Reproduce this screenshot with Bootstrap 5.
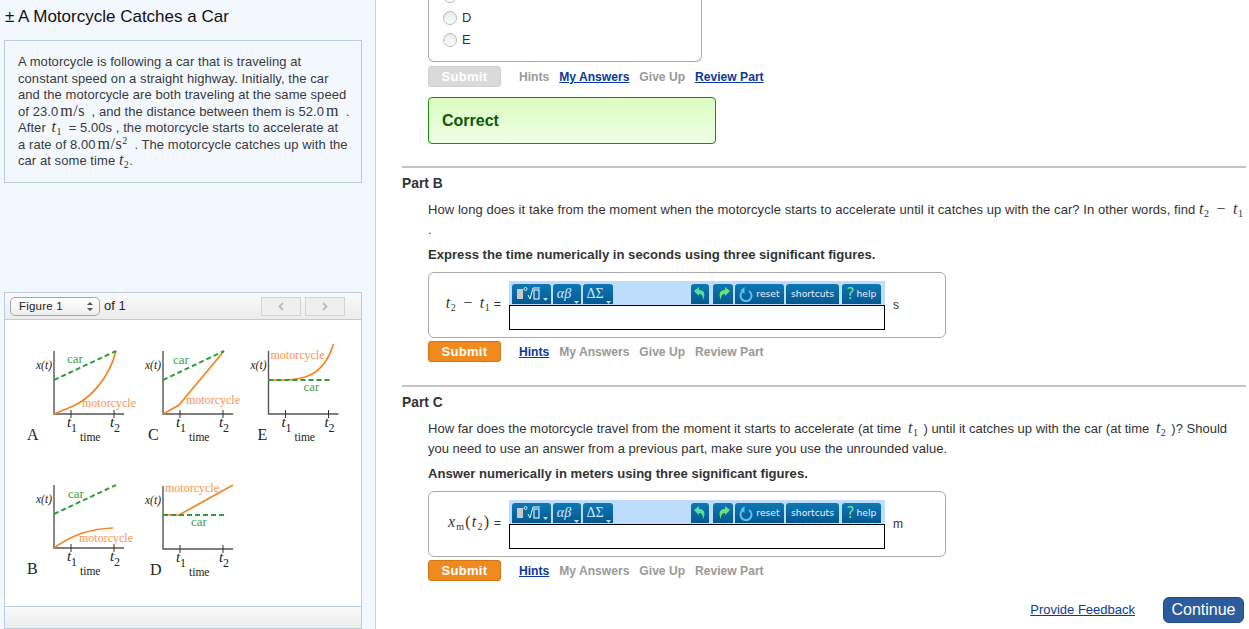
<!DOCTYPE html>
<html lang="en"><head><meta charset="utf-8"><title>A Motorcycle Catches a Car</title>
<link href="https://cdn.jsdelivr.net/npm/bootstrap@5.3.0/dist/css/bootstrap.min.css" rel="stylesheet">
<style>
html,body{height:629px;overflow:hidden;background:#fff}
body{font-family:"Liberation Sans",Arial,sans-serif;font-size:13px;color:#333;line-height:16.5px}
.shell{height:629px}
.sidepane{width:376px;flex:none;background:#f3f8ff;border-right:1px solid #c9d3e0;padding:7px 14px 0 4px}
.ptitle{font-size:17px;font-weight:400;color:#111;line-height:19px;margin:0 0 14px 1px}
.introbox{border:1px solid #b9cde0;height:143px;padding:13px 5px 0 13px;margin-bottom:109px;width:358px;line-height:16.5px;color:#3a3a3a;white-space:nowrap;letter-spacing:.07px}
.mth{font-family:"Liberation Serif",serif;font-size:16px;color:#333;letter-spacing:.5px;line-height:0}
.mth sub{font-size:10px;bottom:-.25em;line-height:0;position:relative;vertical-align:baseline}
.mth sup{font-size:10px;top:-.45em;line-height:0;position:relative;vertical-align:baseline}
.mop{margin:0 7px}
.mgap{margin:0 3px 0 2px}
.mwide{margin:0 5px 0 3px}
.mxm{letter-spacing:1.200px}
.figpanel{border:1px solid #b9cde0;width:358px;height:337px;background:#fff;display:flex;flex-direction:column}
.fighead{height:27px;border-bottom:1px solid #b9cde0;background:linear-gradient(#fafafa,#ececec);padding:0 16px 0 5px}
.figsel{width:90px;height:19px;border:1px solid #a5a5a5;border-radius:5px;background:linear-gradient(#fff,#eee);font-size:11.5px;padding:0 6px 0 8px;color:#222;letter-spacing:.2px}
.pager{width:40px;height:19px;border:1px solid #d3d3d3;background:#efefef}
.figbody{flex:1;min-height:0}
.figbody svg{display:block}
.figfoot{height:22px;border-top:1px solid #b9cde0;background:linear-gradient(#fafafa,#ececec)}
.mainpane{flex:1;min-width:0;padding:0 3px 0 26px}
.radiobox{width:274px;height:63px;margin:-1px 0 4px 26px;border:1px solid #aaa;border-top:0;border-radius:0 0 6px 6px;padding:4px 0 0 14px;color:#333}
.radrow{height:22px;gap:5px}
.radiodot{width:14px;height:14px;border-radius:50%;border:1px solid #bbb;background:linear-gradient(#e8e8e8,#fff);flex:none}
.radcut{margin-top:-18px}
.actions{margin-left:26px;height:21px}
.subbtn{width:73px;height:21px;padding:0;font-size:13px;font-weight:700;line-height:19px;border-radius:3px;color:#fff;letter-spacing:.3px;margin-right:18px}
.subon{background:#f08a1f;border:1px solid #d27615}
.subon:hover{background:#f08a1f;color:#fff}
.btn.suboff:disabled{background:#dadada;border:1px solid #d0d0d0;opacity:1;color:#fff}
.acts{font-weight:700;font-size:12.1px;color:#999;margin-right:10px;padding-top:1px}
a.acts{color:#0b3a9b;text-decoration:underline}
.okbox{margin:10px 0 22px 26px;width:288px;height:47px;border:1px solid #1d8a13;border-radius:4px;background:linear-gradient(#dcfcc2,#eeffe4);color:#0b5a05;font-size:16px;font-weight:700;padding:1px 13px 0;display:flex;align-items:center}
.partrule{height:2px;background:#c4c4c4;margin-bottom:7px}
.partname{font-weight:700;margin:0 0 8px;line-height:17px;font-size:13.800px;color:#333}
.qtext{margin:0 0 0 26px;line-height:19.5px;color:#333;letter-spacing:.07px}
.qtight{letter-spacing:.01px}
.qinstr{margin:7px 0 9px 26px;font-weight:700;line-height:17px;color:#333;font-size:13.100px}
.ansbox{margin-left:26px;width:518px;height:66px;border:1px solid #aaa;border-radius:6px;padding-top:8px;margin-bottom:3px}
.anslabel{width:80px;flex:none;text-align:right;padding:15px 8px 0 0;font-size:12.500px;white-space:nowrap}
.editor{width:376px;flex:none}
.edbar{height:24px;background:#bedcfb;padding:3px 4px 0 3px;gap:2px}
.edgroup{gap:2px}
.edbtn{height:20px;border-radius:3px 3px 0 0;background:linear-gradient(#0e78b4,#04598f);color:#eef;font-family:"DejaVu Sans",sans-serif;font-size:9.200px;display:flex;align-items:center;justify-content:center;line-height:1;white-space:nowrap}
.edbtn svg{display:block}
.wa{width:39px}.wb{width:28px}.wc{width:30px}.wd{width:18px;margin-right:2px}.we{width:20px}.wf{width:49px;gap:3px}.wg{width:53px}.wh{width:39px;gap:2px;margin-left:1px}
.greek{font-family:"Liberation Serif",serif;font-size:14px;color:#cfeaff;padding-right:6px;position:relative}
.greek svg{position:absolute;right:1px;bottom:-3px}
.qmark{font-family:"DejaVu Sans",sans-serif;font-size:15px;color:#6fe58c}
.edinput{height:25px;border:1.500px solid #000;background:#fff}
.unitlbl{padding:16px 0 0 8px;font-size:12px}
.foot{justify-content:flex-end;align-items:center;padding-right:2px;margin-top:16px;gap:28px}
.feedback{color:#0b3a9b;font-size:13px;text-decoration:underline}
.contbtn{width:81px;height:26px;padding:0;background:#2c5c9c;border:1px solid #1f4b82;border-radius:6px;color:#fff;font-size:16px;line-height:22px}
.contbtn:hover{background:#2c5c9c;color:#fff}
.gaps{margin-bottom:23px}
.fm{font-family:"Liberation Serif",serif;fill:#222}
.fcar{fill:#3fa04a;font-size:13px}
.fmot{fill:#fb9350;font-size:12px}
.flet{font-size:16px}
.lo{fill:none;stroke:#f58420;stroke-width:1.700}
.lg{fill:none;stroke:#2f9e3a;stroke-width:2;stroke-dasharray:5 3}
</style></head><body>
<svg width="0" height="0" class="position-absolute"><defs>
<g id="ax" fill="none" stroke="#555" stroke-width="1.400"><path d="M0-63V0H70"/><path d="M17-4V4M60-4V4" stroke="#333" stroke-width="1"/></g>
<g id="lb" class="fm"><text x="-18" y="-45" font-size="11.500" font-style="italic">x(t)</text><text x="13" y="13" font-size="15" font-style="italic">t</text><text x="17" y="18" font-size="12">1</text><text x="56" y="13" font-size="15" font-style="italic">t</text><text x="60" y="18" font-size="12">2</text><text x="26" y="27" font-size="11.500">time</text></g>
<g id="undo"><path d="M3 7 8 3V6C13 6 15 10 12 16 12 12 11 10 8 10V12Z" fill="#58dfa0"/></g>
<g id="redo"><path d="M17 7 12 3V6C7 6 5 10 8 16 8 12 9 10 12 10V12Z" fill="#70e070"/></g>
<path id="drop" d="M0 0H5L2.500 3Z" fill="#bfe0f5"/>
</defs></svg>
<div class="d-flex shell">
<aside class="sidepane">
<h1 class="ptitle">± A Motorcycle Catches a Car</h1>
<div class="introbox">A motorcycle is following a car that is traveling at<br>constant speed on a straight highway. Initially, the car<br>and the motorcycle are both traveling at the same speed<br>of 23.0<span class="mth mgap">m/s</span> , and the distance between them is 52.0<span class="mth mgap">m</span> .<br>After <span class="mth mgap"><i>t</i><sub>1</sub></span> = 5.00s , the motorcycle starts to accelerate at<br>a rate of 8.00<span class="mth mgap">m/s<sup>2</sup></span> . The motorcycle catches up with the<br>car at some time <span class="mth"><i>t</i><sub>2</sub></span>.</div>
<div class="figpanel">
<div class="fighead d-flex align-items-center">
<div class="figsel d-flex align-items-center justify-content-between"><span>Figure 1</span><svg width="6" height="9" viewBox="0 0 6 9"><path d="M3 0 6 3H0ZM3 9 0 6H6Z" fill="#555"/></svg></div>
<span class="ms-1 text-dark">of 1</span>
<div class="ms-auto d-flex gap-1 align-items-center">
<div class="pager d-flex align-items-center justify-content-center"><svg width="6" height="9" viewBox="0 0 6 9"><path d="M5 1 1.500 4.500 5 8" fill="none" stroke="#bbb" stroke-width="1.800"/></svg></div>
<div class="pager d-flex align-items-center justify-content-center"><svg width="6" height="9" viewBox="0 0 6 9"><path d="M1 1 4.500 4.500 1 8" fill="none" stroke="#bbb" stroke-width="1.800"/></svg></div>
</div></div>
<div class="figbody">
<svg width="356" height="286" viewBox="5 320 356 286" aria-label="Five position-time graphs">
<g transform="translate(54,414)"><use href="#ax"/><use href="#lb"/>
<path class="lo" d="M0 0 17-7C35-14 55-35 62-63"/><path class="lg" d="M0-34 62-63"/>
<text x="13" y="-51" class="fm fcar">car</text><text x="28" y="-7" class="fm fmot">motorcycle</text><text x="-27" y="26" class="fm flet">A</text></g>
<g transform="translate(163,414)"><use href="#ax"/><use href="#lb"/>
<path class="lo" d="M0 0 16-9 61-63"/><path class="lg" d="M0-34 61-63"/>
<text x="10" y="-50" class="fm fcar">car</text><text x="23" y="-10" class="fm fmot">motorcycle</text><text x="-15" y="26" class="fm flet">C</text></g>
<g transform="translate(268.500,414)"><use href="#ax"/><use href="#lb"/>
<path class="lo" d="M0-34H15C35-34 55-38 65-70"/><path class="lg" d="M0-34H62"/>
<text x="35" y="-23" class="fm fcar">car</text><text x="2" y="-55" class="fm fmot">motorcycle</text><text x="-11" y="26" class="fm flet">E</text></g>
<g transform="translate(54,548)"><use href="#ax"/><use href="#lb"/>
<path class="lo" d="M0 0C18-13 35-19 59-20"/><path class="lg" d="M0-34 62-63"/>
<text x="14" y="-50" class="fm fcar">car</text><text x="25" y="-6" class="fm fmot">motorcycle</text><text x="-27" y="26" class="fm flet">B</text></g>
<g transform="translate(163,549)"><use href="#ax"/><use href="#lb"/>
<path class="lo" d="M0-34H16L70-64"/><path class="lg" d="M0-34H61"/>
<text x="28" y="-23" class="fm fcar">car</text><text x="2" y="-57" class="fm fmot">motorcycle</text><text x="-13" y="26" class="fm flet">D</text></g>
</svg>
</div>
<div class="figfoot"></div>
</div>
</aside>
<main class="mainpane">
<div class="radiobox">
<div class="radcut d-flex align-items-center radrow"><span class="radiodot"></span></div>
<div class="d-flex align-items-center radrow"><span class="radiodot"></span><span>D</span></div>
<div class="d-flex align-items-center radrow"><span class="radiodot"></span><span>E</span></div>
</div>
<div class="d-flex align-items-center actions">
<button class="btn subbtn suboff" disabled>Submit</button>
<span class="acts">Hints</span><a class="acts" href="#">My Answers</a><span class="acts">Give Up</span><a class="acts" href="#">Review Part</a>
</div>
<div class="okbox">Correct</div>
<div class="partrule"></div>
<h2 class="partname">Part B</h2>
<p class="qtext">How long does it take from the moment when the motorcycle starts to accelerate until it catches up with the car? In other words, find <span class="mth"><i>t</i><sub>2</sub><span class="mop">−</span><i>t</i><sub>1</sub></span><br>.</p>
<p class="qinstr">Express the time numerically in seconds using three significant figures.</p>
<div class="ansbox d-flex">
<div class="anslabel"><span class="mth"><i>t</i><sub>2</sub><span class="mop">−</span><i>t</i><sub>1</sub></span> =</div>
<div class="editor">
<div class="edbar d-flex">
<div class="edbtn wa"><svg width="39" height="20" viewBox="0 0 39 20"><rect x="5" y="5" width="6" height="10" fill="#c8c8c8"/><circle cx="13.500" cy="5" r="1.500" fill="none" stroke="#fff" stroke-width=".8"/><path d="M16 11 18 15 21 4H28" fill="none" stroke="#dff" stroke-width="1"/><rect x="22" y="6" width="5" height="9" fill="none" stroke="#fff"/><use href="#drop" x="31" y="14"/></svg></div>
<div class="edbtn wb greek"><i>αβ</i><svg width="6" height="6" viewBox="0 0 6 6"><use href="#drop"/></svg></div>
<div class="edbtn wc greek">ΔΣ<svg width="6" height="6" viewBox="0 0 6 6"><use href="#drop"/></svg></div>
<div class="ms-auto d-flex edgroup">
<div class="edbtn wd"><svg width="18" height="20" viewBox="0 0 18 20"><use href="#undo"/></svg></div>
<div class="edbtn we"><svg width="20" height="20" viewBox="0 0 20 20"><use href="#redo"/></svg></div>
<div class="edbtn wf"><svg width="14" height="16" viewBox="0 0 14 16"><path d="M4 5A5.500 5.500 0 1 0 10 5" fill="none" stroke="#62bdf0" stroke-width="2"/><path d="M5.500 1V8L1.500 4.500Z" fill="#62bdf0"/></svg>reset</div>
<div class="edbtn wg">shortcuts</div>
<div class="edbtn wh"><span class="qmark">?</span>help</div>
</div>
</div>
<div class="edinput"></div>
</div>
<div class="unitlbl">s</div>
</div>
<div class="d-flex align-items-center actions gaps">
<button class="btn subbtn subon">Submit</button>
<a class="acts" href="#">Hints</a><span class="acts">My Answers</span><span class="acts">Give Up</span><span class="acts">Review Part</span>
</div>
<div class="partrule"></div>
<h2 class="partname">Part C</h2>
<p class="qtext qtight">How far does the motorcycle travel from the moment it starts to accelerate (at time <span class="mth mwide"><i>t</i><sub>1</sub></span>) until it catches up with the car (at time <span class="mth mwide"><i>t</i><sub>2</sub></span>)? Should<br>you need to use an answer from a previous part, make sure you use the unrounded value.</p>
<p class="qinstr">Answer numerically in meters using three significant figures.</p>
<div class="ansbox d-flex">
<div class="anslabel"><span class="mth mxm"><i>x</i><sub>m</sub>(<i>t</i><sub>2</sub>)</span> =</div>
<div class="editor">
<div class="edbar d-flex">
<div class="edbtn wa"><svg width="39" height="20" viewBox="0 0 39 20"><rect x="5" y="5" width="6" height="10" fill="#c8c8c8"/><circle cx="13.500" cy="5" r="1.500" fill="none" stroke="#fff" stroke-width=".8"/><path d="M16 11 18 15 21 4H28" fill="none" stroke="#dff" stroke-width="1"/><rect x="22" y="6" width="5" height="9" fill="none" stroke="#fff"/><use href="#drop" x="31" y="14"/></svg></div>
<div class="edbtn wb greek"><i>αβ</i><svg width="6" height="6" viewBox="0 0 6 6"><use href="#drop"/></svg></div>
<div class="edbtn wc greek">ΔΣ<svg width="6" height="6" viewBox="0 0 6 6"><use href="#drop"/></svg></div>
<div class="ms-auto d-flex edgroup">
<div class="edbtn wd"><svg width="18" height="20" viewBox="0 0 18 20"><use href="#undo"/></svg></div>
<div class="edbtn we"><svg width="20" height="20" viewBox="0 0 20 20"><use href="#redo"/></svg></div>
<div class="edbtn wf"><svg width="14" height="16" viewBox="0 0 14 16"><path d="M4 5A5.500 5.500 0 1 0 10 5" fill="none" stroke="#62bdf0" stroke-width="2"/><path d="M5.500 1V8L1.500 4.500Z" fill="#62bdf0"/></svg>reset</div>
<div class="edbtn wg">shortcuts</div>
<div class="edbtn wh"><span class="qmark">?</span>help</div>
</div>
</div>
<div class="edinput"></div>
</div>
<div class="unitlbl">m</div>
</div>
<div class="d-flex align-items-center actions">
<button class="btn subbtn subon">Submit</button>
<a class="acts" href="#">Hints</a><span class="acts">My Answers</span><span class="acts">Give Up</span><span class="acts">Review Part</span>
</div>
<div class="d-flex foot">
<a class="feedback" href="#">Provide Feedback</a>
<button class="btn contbtn">Continue</button>
</div>
</main>
</div>
</body></html>
